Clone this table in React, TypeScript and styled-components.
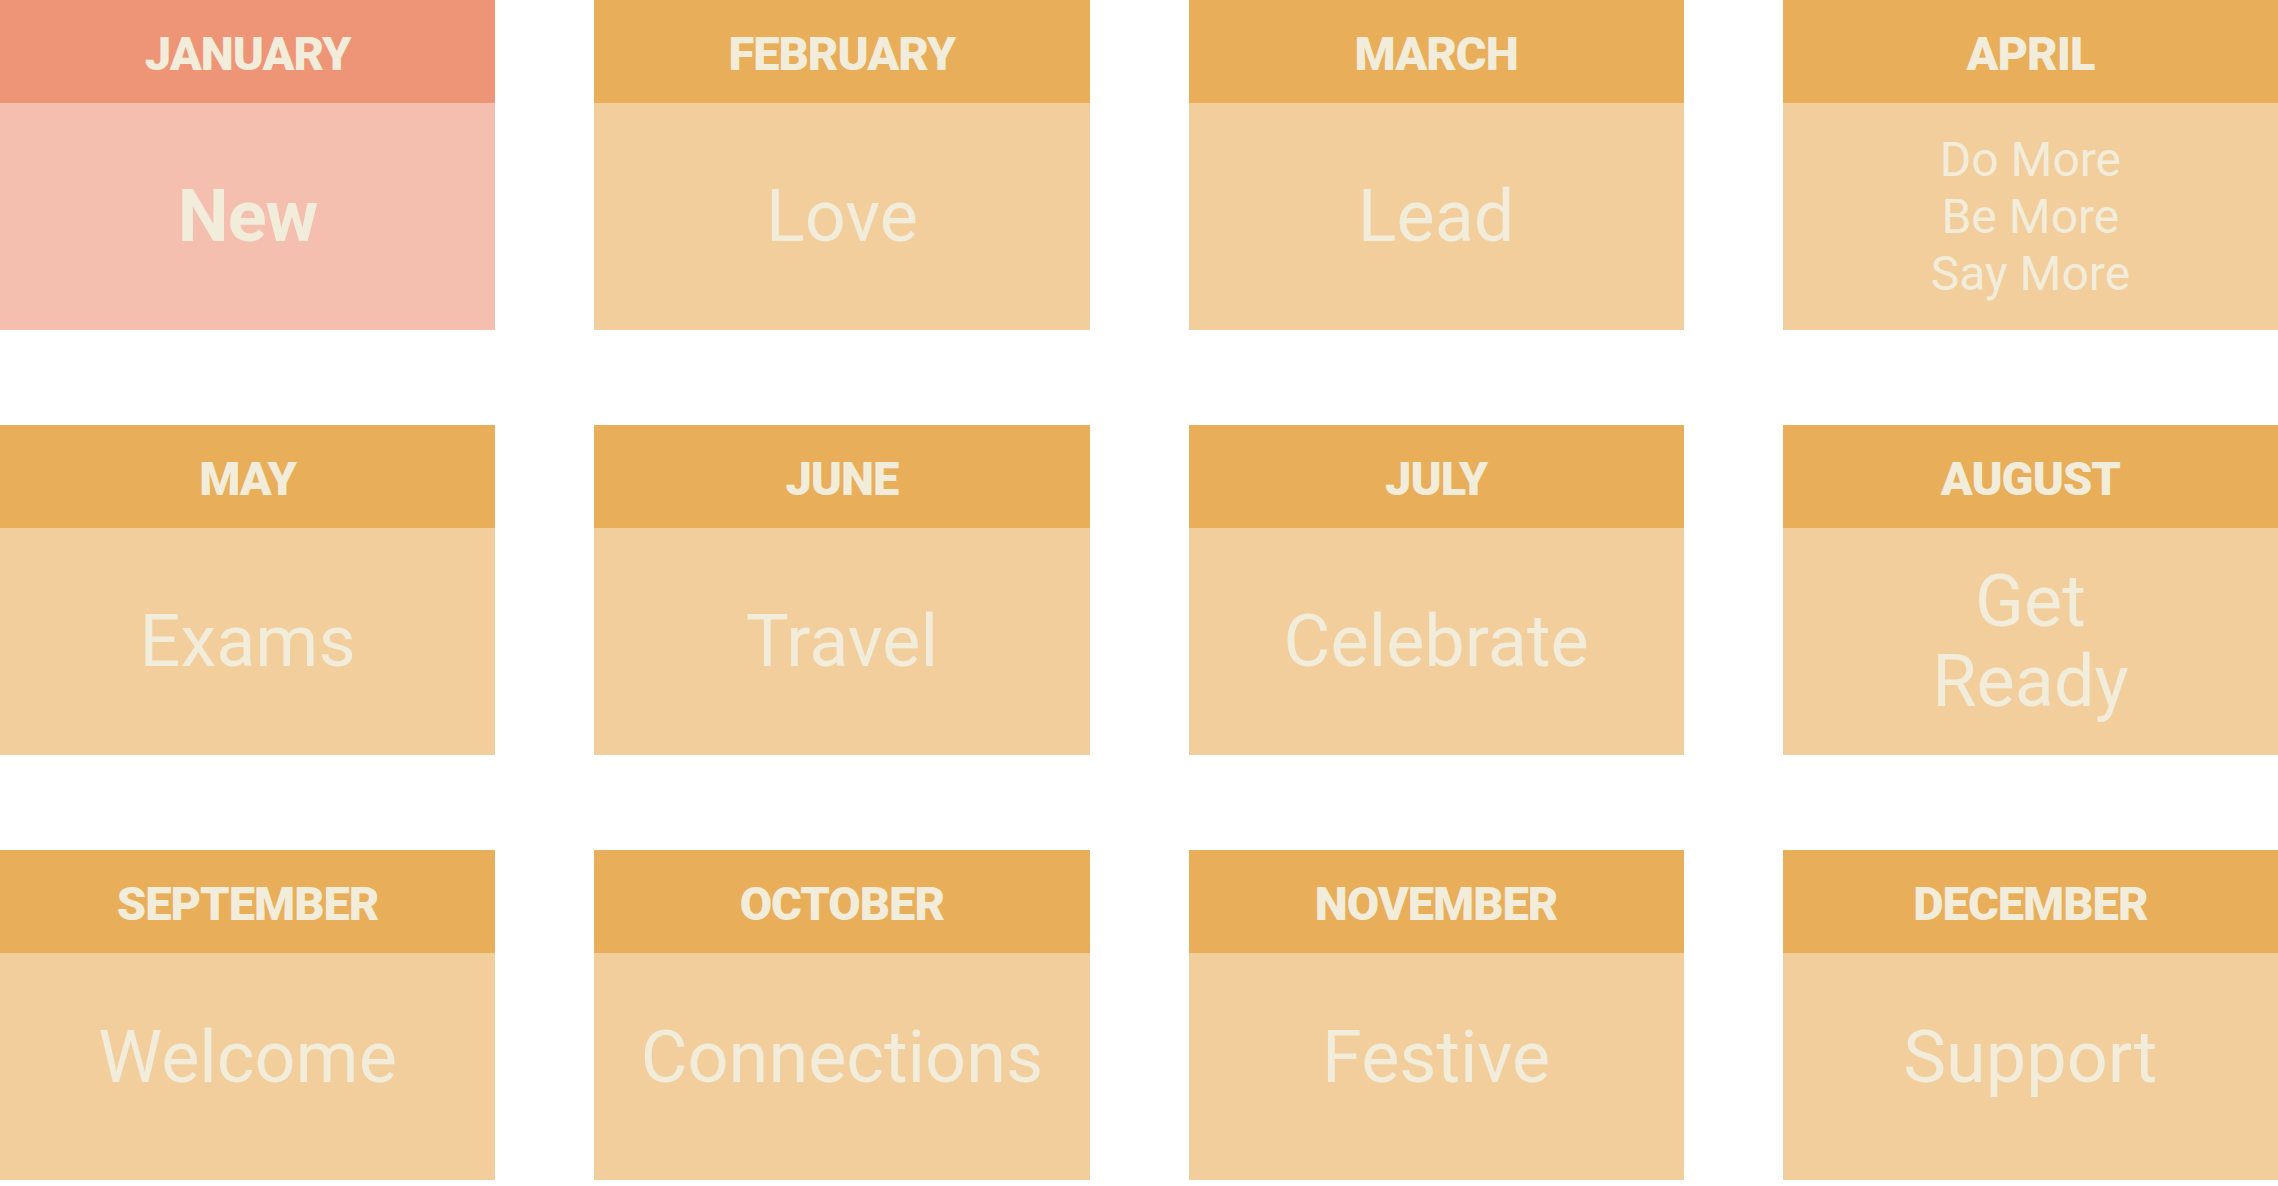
import styled, { createGlobalStyle } from 'styled-components';

type Month = {
  name: string;
  lines: string[];
  highlight?: boolean;
  small?: boolean;
};

const MONTHS: Month[] = [
  { name: 'JANUARY', lines: ['New'], highlight: true },
  { name: 'FEBRUARY', lines: ['Love'] },
  { name: 'MARCH', lines: ['Lead'] },
  { name: 'APRIL', lines: ['Do More', 'Be More', 'Say More'], small: true },
  { name: 'MAY', lines: ['Exams'] },
  { name: 'JUNE', lines: ['Travel'] },
  { name: 'JULY', lines: ['Celebrate'] },
  { name: 'AUGUST', lines: ['Get', 'Ready'] },
  { name: 'SEPTEMBER', lines: ['Welcome'] },
  { name: 'OCTOBER', lines: ['Connections'] },
  { name: 'NOVEMBER', lines: ['Festive'] },
  { name: 'DECEMBER', lines: ['Support'] },
];

const GlobalStyle = createGlobalStyle`
  html, body {
    margin: 0;
    padding: 0;
    background: #ffffff;
  }

  body {
    font-family: Roboto, 'Liberation Sans', sans-serif;
  }
`;

const Grid = styled.div`
  display: grid;
  grid-template-columns: repeat(4, 1fr);
  column-gap: 99px;
  row-gap: 95px;
  width: 2278px;
`;

const Card = styled.section`
  display: flex;
  flex-direction: column;
  height: 330px;
`;

const Header = styled.div<{ $highlight?: boolean }>`
  display: flex;
  align-items: center;
  justify-content: center;
  height: 103px;
  padding-top: 3px;
  box-sizing: border-box;
  background: ${(p) => (p.$highlight ? '#ef9577' : '#e8ae5a')};
  font-size: 47px;
  font-weight: 900;
  letter-spacing: -1px;
  color: #f2ecda;
`;

// the bottom row sits its text a little above the middle
const Body = styled.div<{ $highlight?: boolean; $lift?: boolean }>`
  flex: 1;
  display: flex;
  flex-direction: column;
  align-items: center;
  justify-content: center;
  padding-bottom: ${(p) => (p.$lift ? '18px' : '0')};
  background: ${(p) => (p.$highlight ? '#f4bfae' : '#f2ce9c')};
  color: #f2ecda;
`;

const Line = styled.div<{ $bold?: boolean; $small?: boolean }>`
  font-size: ${(p) => (p.$small ? '48px' : '72px')};
  line-height: ${(p) => (p.$small ? '57px' : '80px')};
  font-weight: ${(p) => (p.$bold ? 700 : 400)};
  letter-spacing: ${(p) => (p.$bold ? '-1px' : '0')};
  text-align: center;
  white-space: nowrap;
`;

export default function App() {
  return (
    <>
      <GlobalStyle />
      <Grid>
        {MONTHS.map((m, i) => (
          <Card key={m.name}>
            <Header $highlight={m.highlight}>{m.name}</Header>
            <Body $highlight={m.highlight} $lift={i >= 8}>
              {m.lines.map((line) => (
                <Line key={line} $bold={m.highlight} $small={m.small}>
                  {line}
                </Line>
              ))}
            </Body>
          </Card>
        ))}
      </Grid>
    </>
  );
}
